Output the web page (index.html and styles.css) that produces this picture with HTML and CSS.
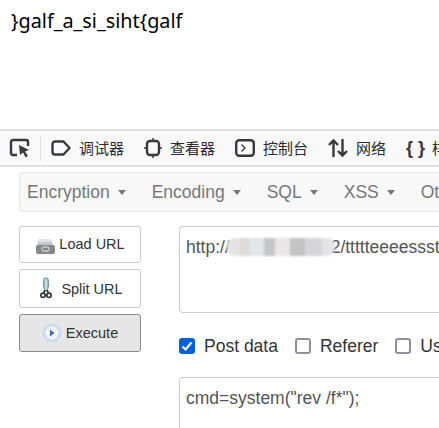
FILE: index.html
```html
<!DOCTYPE html>
<html lang="zh">
<head>
<meta charset="utf-8">
<title>HackBar</title>
<link rel="stylesheet" href="styles.css">
</head>
<body>
<div class="page-output">}galf_a_si_siht{galf</div>
<div class="devtools">
  <div class="tool picker">
    <svg width="22" height="20" viewBox="0 0 22 20"><path d="M8 17H4a2 2 0 0 1-2-2V4a2 2 0 0 1 2-2h13a2 2 0 0 1 2 2v4" fill="none" stroke="#38383d" stroke-width="2.400"/><path d="M10 7l10 5-4 1.500 3 4.500-2.500 1.300-2.500-4.800-3 2.500z" fill="#38383d"/></svg>
  </div>
  <div class="tool">
    <svg width="20" height="16" viewBox="0 0 20 16"><path d="M1.500 4a2.500 2.500 0 0 1 2.500-2.500h8.500L18.500 8l-6 6.500H4A2.500 2.500 0 0 1 1.500 12z" fill="none" stroke="#38383d" stroke-width="2.400" stroke-linejoin="round"/></svg>
    <span>调试器</span>
  </div>
  <div class="tool">
    <svg width="18" height="20" viewBox="0 0 18 20"><rect x="3" y="3" width="12" height="14" rx="3" fill="none" stroke="#38383d" stroke-width="2.400"/><path d="M9 0v3M9 17v3M0 10h3M15 10h3" stroke="#38383d" stroke-width="1.500"/></svg>
    <span>查看器</span>
  </div>
  <div class="tool">
    <svg width="20" height="18" viewBox="0 0 20 18"><rect x="1.200" y="1.200" width="17.600" height="15.600" rx="3" fill="none" stroke="#38383d" stroke-width="2.400"/><path d="M6.500 5.500l3.500 3.500-3.500 3.500" fill="none" stroke="#38383d" stroke-width="1.300"/></svg>
    <span>控制台</span>
  </div>
  <div class="tool">
    <svg width="20" height="20" viewBox="0 0 20 20"><path d="M5.500 19V2.500M1 7l4.500-4.500L10 7M14.500 1v16.500M10 13l4.500 4.500L19 13" fill="none" stroke="#38383d" stroke-width="2.400"/></svg>
    <span>网络</span>
  </div>
  <div class="tool">
    <span class="braces">{ }</span>
    <span>样式</span>
  </div>
</div>
<div class="hackbar">
  <nav class="menu">
    <span class="menu-item">Encryption<i class="caret"></i></span>
    <span class="menu-item">Encoding<i class="caret"></i></span>
    <span class="menu-item">SQL<i class="caret"></i></span>
    <span class="menu-item">XSS<i class="caret"></i></span>
    <span class="menu-item">Other<i class="caret"></i></span>
  </nav>
  <div class="panel">
    <div class="actions">
      <div class="btn btn-load">
        <svg class="icon-load" width="20" height="18" viewBox="0 0 20 18"><path d="M4 3h12l3 7H1z" fill="#c6c8ca"/><path d="M4 2h12l1 3H3z" fill="#e1e2e3"/><rect x="1" y="8" width="19" height="9" rx="2" fill="#85878a"/><rect x="7" y="10" width="7" height="4" rx="1.500" fill="none" stroke="#eceded"/></svg>
        <span>Load URL</span>
      </div>
      <div class="btn btn-split">
        <svg width="12" height="23" viewBox="0 0 14 26"><path d="M5 1C3 6 4 12 6 16h2c2-4 3-10 1-15z" fill="#9cbfd0" stroke="#5c7f92"/><path d="M7 2v13" stroke="#fff"/><circle cx="3.500" cy="21" r="2.500" fill="none" stroke="#333" stroke-width="2"/><circle cx="10.500" cy="21" r="2.500" fill="none" stroke="#333" stroke-width="2"/><path d="M4 18l2-3M10 18l-2-3" stroke="#333" stroke-width="2"/></svg>
        <span>Split URL</span>
      </div>
      <div class="btn btn-run">
        <svg width="20" height="20" viewBox="0 0 20 20"><circle cx="10" cy="10" r="9.500" fill="#c9dcf3"/><circle cx="10" cy="10" r="6.500" fill="#f3f6fb"/><path d="M8 6.500l4.500 3.500L8 13.500z" fill="#3d6ca8"/></svg>
        <span>Execute</span>
      </div>
    </div>
    <div class="fields">
      <div class="field field-url">
        <span class="field-text">http://121.36.11.172/ttttteeeessst.php</span>
        <span class="blur"></span>
      </div>
      <div class="options">
        <label class="opt"><span class="box checked"><svg width="16" height="16" viewBox="0 0 16 16"><path d="M3.500 8.500l3 3 6-7" fill="none" stroke="#fff" stroke-width="2.200"/></svg></span>Post data</label>
        <label class="opt"><span class="box"></span>Referer</label>
        <label class="opt"><span class="box"></span>User Agent</label>
      </div>
      <div class="field field-post">
        <span class="field-text">cmd=system("rev /f*");</span>
      </div>
    </div>
  </div>
</div>
</body>
</html>
```
FILE: styles.css
```css
* { box-sizing: border-box; }
html, body { margin: 0; height: 428px; overflow: hidden; background: #fff; }
body { font-family: "Liberation Sans", Arial, sans-serif; width: 439px; }

.page-output {
  height: 129px;
  padding: 8px 0 0 11px;
  font: 19.800px/26px "Noto Sans", "Noto Sans CJK SC", sans-serif;
  color: #000;
  white-space: nowrap;
}

.devtools {
  height: 38px;
  display: flex;
  align-items: center;
  background: #f9f9fa;
  border-top: 2px solid #e0e0e2;
  border-bottom: 2px solid #e0e0e2;
  white-space: nowrap;
  overflow: hidden;
}
.tool {
  display: flex;
  align-items: center;
  flex: none;
  gap: 8px;
  margin-right: 20px;
  font: 15px/20px "Noto Sans CJK SC", sans-serif;
  color: #2a2a2e;
}
.tool svg { flex: none; }
.picker {
  width: 41px;
  height: 25px;
  margin-right: 10px;
  padding-left: 9px;
  border-right: 1px solid #e0e0e2;
}
.braces {
  width: 18px;
  font: bold 18px/20px "Liberation Sans", sans-serif;
  color: #38383d;
}

.hackbar { padding: 5px 0 0 19px; }
.menu {
  height: 40px;
  display: flex;
  align-items: center;
  gap: 26px;
  padding-left: 7px;
  background: #f8f8f8;
  border: 1px solid #e7e7e7;
  border-right: 0;
  border-radius: 4px 0 0 4px;
  font-size: 17.500px;
  color: #777;
  white-space: nowrap;
  overflow: hidden;
}
.menu-item { display: flex; align-items: center; flex: none; }
.caret {
  margin-left: 8px;
  border-top: 5px solid #777;
  border-left: 4.500px solid transparent;
  border-right: 4.500px solid transparent;
}

.panel { display: flex; margin-top: 14px; }
.actions { width: 122px; flex: none; display: flex; flex-direction: column; gap: 6px; }
.btn {
  display: flex;
  align-items: center;
  justify-content: center;
  gap: 4px;
  background: #fff;
  border: 1px solid #ccc;
  border-radius: 3px;
  font-size: 14.500px;
  color: #333;
}
.btn-load { height: 37px; padding-bottom: 2px; }
.icon-load { margin-top: 4px; }
.btn-split { height: 39px; gap: 9px; padding-left: 3px; }
.btn-run {
  height: 38px;
  padding-bottom: 1px;
  background: #e6e6e6;
  border-color: #8c8c8c;
}

.fields { margin-left: 38px; flex: 1; min-width: 0; }
.field {
  position: relative;
  border: 1px solid #ccc;
  border-right: 0;
  border-radius: 4px 0 0 4px;
  padding: 9px 6px;
  font-size: 17.500px;
  line-height: 22px;
  color: #555;
  white-space: nowrap;
  overflow: hidden;
}
.field-url { height: 87px; }
.field-post { height: 60px; margin-top: 21px; }
.field-text { display: block; }
.blur {
  position: absolute;
  left: 47px;
  top: 11px;
  width: 108px;
  height: 18px;
  border-radius: 8px;
  filter: blur(1px);
  background: linear-gradient(90deg, #e4e4e6 0 12%, #dcd9d7 12% 20%, #e3e5e7 20% 34%, #c4c6c8 34% 44%, #ebe6e6 44% 58%, #c2c4c4 58% 72%, #d5d6d7 72% 88%, #e4e4e6 88%);
}

.options {
  display: flex;
  align-items: center;
  height: 20px;
  margin-top: 23px;
  gap: 17px;
  font-size: 17.500px;
  color: #333;
  white-space: nowrap;
}
.opt { display: flex; align-items: center; gap: 9px; flex: none; }
.box {
  width: 16px;
  height: 16px;
  flex: none;
  display: block;
  background: #fff;
  border: 2px solid #8f8f9d;
  border-radius: 3px;
}
.box.checked { background: #0060df; border: 0; }
.box.checked svg { display: block; }
```
